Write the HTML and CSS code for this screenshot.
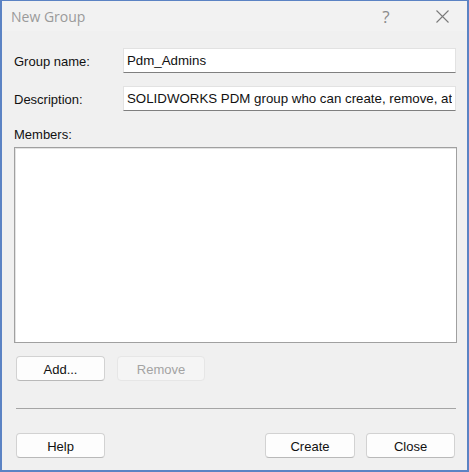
FILE: index.html
```html
<!DOCTYPE html>
<html lang="en">
<head>
<meta charset="utf-8">
<title>New Group</title>
<link rel="stylesheet" href="styles.css">
</head>
<body>
<div class="window">
  <div class="titlebar">
    <span class="title">New Group</span>
    <div class="caption">
      <span class="cap-help">?</span>
      <span class="cap-close">
        <svg width="13" height="13" viewBox="0 0 13 13"><path d="M0.5 0.5 L12.5 12.5 M12.5 0.5 L0.5 12.5" stroke="#7a7a7a" stroke-width="1.1" fill="none"/></svg>
      </span>
    </div>
  </div>
  <div class="content">
    <div class="field">
      <label class="label">Group name:</label>
      <input class="textbox" type="text" value="Pdm_Admins">
    </div>
    <div class="field">
      <label class="label">Description:</label>
      <input class="textbox" type="text" value="SOLIDWORKS PDM group who can create, remove, attach and manage users">
    </div>
    <div class="members-label">Members:</div>
    <div class="listbox"></div>
    <div class="button-row">
      <button class="btn">Add...</button>
      <button class="btn btn-remove" disabled>Remove</button>
    </div>
    <div class="separator"></div>
    <div class="footer">
      <button class="btn">Help</button>
      <div class="footer-right">
        <button class="btn">Create</button>
        <button class="btn">Close</button>
      </div>
    </div>
  </div>
</div>
</body>
</html>
```
FILE: styles.css
```css
html, body {
  margin: 0;
  padding: 0;
  background: #f0f0f0;
}
.window {
  width: 469px;
  height: 472px;
  box-sizing: border-box;
  border: 2px solid #5b83c4;
  border-top-width: 1px;
  background: #f0f0f0;
  display: flex;
  flex-direction: column;
  font-family: "Liberation Sans", Arial, sans-serif;
  font-size: 13px;
  color: #111111;
}
.titlebar {
  height: 30px;
  display: flex;
  align-items: center;
  padding-left: 9px;
  background: #f2f2f2;
}
.title {
  font-family: "Open Sans", "Noto Sans", sans-serif;
  font-size: 14px;
  color: #9a9a9a;
}
.caption {
  margin-left: auto;
  display: flex;
  align-items: center;
  height: 100%;
}
.cap-help {
  width: 62px;
  text-align: center;
  font-family: "Open Sans", "Noto Sans", sans-serif;
  font-size: 17px;
  color: #8a8a8a;
}
.cap-close {
  width: 50px;
  display: flex;
  justify-content: center;
  align-items: center;
}
.content {
  flex: 1;
  padding: 17px 10px 0 12px;
  display: flex;
  flex-direction: column;
}
.field {
  display: flex;
  align-items: center;
  height: 25px;
  margin-bottom: 13px;
}
.label {
  width: 109px;
  flex: none;
  padding-top: 2px;
}
.textbox {
  flex: 1;
  min-width: 0;
  height: 25px;
  box-sizing: border-box;
  margin: 0 1px 0 0;
  padding: 0 3px;
  border: 1px solid #e2e2e2;
  border-bottom: 1px solid #7f7f7f;
  background: #ffffff;
  font-family: "Liberation Sans", Arial, sans-serif;
  font-size: 13.3px;
  color: #111111;
  outline: none;
}
.members-label {
  margin-top: 3px;
  line-height: 15px;
}
.listbox {
  margin-top: 5px;
  height: 196px;
  box-sizing: border-box;
  border: 1px solid #a0a0a0;
  box-shadow: inset 1px 1px 0 #e3e3e3;
  background: #ffffff;
}
.button-row {
  display: flex;
  gap: 12px;
  margin: 13px 0 0 2px;
}
.btn {
  width: 89px;
  height: 25px;
  box-sizing: border-box;
  border: 1px solid #d2d2d2;
  border-bottom-color: #b9b9b9;
  border-radius: 4px;
  background: #fdfdfd;
  font-family: "Liberation Sans", Arial, sans-serif;
  font-size: 13px;
  color: #111111;
  padding: 1px 0 0 0;
}
.btn-remove {
  width: 88px;
  background: #f5f5f5;
  border-color: #e6e6e6;
  color: #a3a3a3;
}
.separator {
  margin: 27px 1px 0 2px;
  border-top: 1px solid #a5a5a5;
}
.footer {
  display: flex;
  justify-content: space-between;
  margin: 24px 2px 0 2px;
}
.footer-right {
  display: flex;
  gap: 11px;
}
.footer-right .btn:first-child {
  width: 90px;
}
```
